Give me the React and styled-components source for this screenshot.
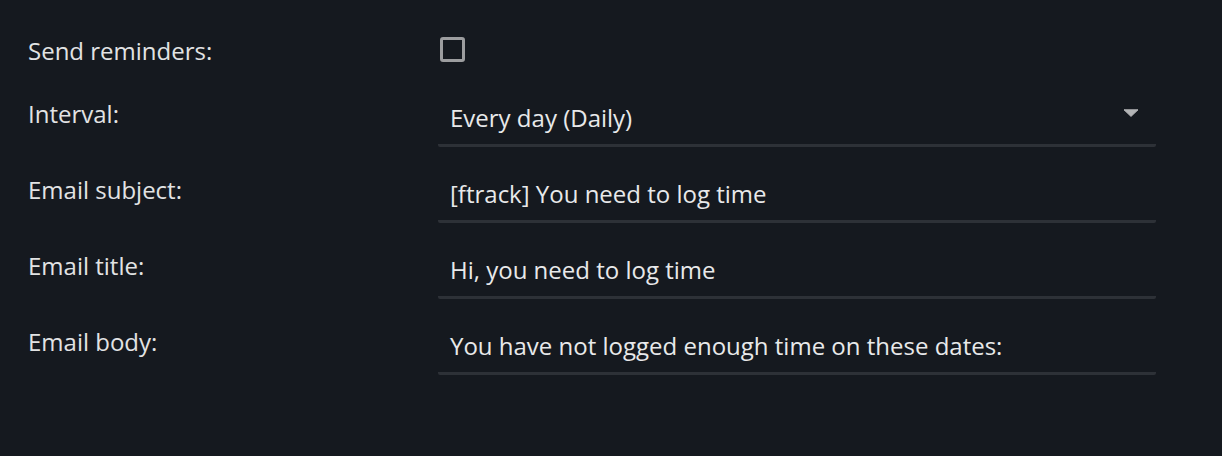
import React, { useState } from "react";
import styled, { createGlobalStyle } from "styled-components";

const GlobalStyle = createGlobalStyle`
  html, body {
    margin: 0;
    padding: 0;
    background: #15191f;
  }
  #root {
    min-height: 100vh;
  }
`;

const Page = styled.div`
  box-sizing: border-box;
  min-height: 100vh;
  background: #15191f;
  font-family: "Open Sans", "Noto Sans", sans-serif;
  font-size: 24px;
  color: #e4e5e6;
`;

const Form = styled.div`
  display: flex;
  flex-direction: column;
  gap: 26px;
  padding: 34px 0 0 28px;
`;

const Row = styled.div`
  display: grid;
  grid-template-columns: 410px 718px;
  align-items: start;
`;

const Label = styled.label`
  line-height: 33px;
  color: #e2e3e4;
`;

const CheckCell = styled.div`
  box-sizing: border-box;
  height: 37px;
  padding: 3px 0 0 2px;
`;

const CheckBox = styled.button`
  box-sizing: border-box;
  display: block;
  width: 25px;
  height: 25px;
  padding: 0;
  border: 3px solid #9c9d9f;
  border-radius: 3px;
  background: ${(p) => (p.checked ? "#9c9d9f" : "transparent")};
  cursor: pointer;
`;

const Field = styled.div`
  box-sizing: border-box;
  display: flex;
  align-items: flex-start;
  justify-content: space-between;
  padding: 4px 17px 10px 12px;
  border-bottom: 3px solid #2d3137;
  border-radius: 0 0 2px 2px;
  line-height: 33px;
  color: #e8e9ea;
  cursor: ${(p) => (p.select ? "pointer" : "text")};
`;

const Value = styled.span`
  white-space: nowrap;
`;

const Caret = styled.svg`
  display: block;
  margin-top: 8px;
  flex: none;
`;

const fields = [
  { label: "Email subject:", value: "[ftrack] You need to log time" },
  { label: "Email title:", value: "Hi, you need to log time" },
  { label: "Email body:", value: "You have not logged enough time on these dates:" },
];

export default function App() {
  const [remind, setRemind] = useState(false);

  return (
    <Page>
      <GlobalStyle />
      <Form>
        <Row>
          <Label>Send reminders:</Label>
          <CheckCell>
            <CheckBox checked={remind} onClick={() => setRemind(!remind)} />
          </CheckCell>
        </Row>
        <Row>
          <Label>Interval:</Label>
          <Field select>
            <Value>Every day (Daily)</Value>
            <Caret width="16" height="8" viewBox="0 0 16 8">
              <path d="M1 0.8 L15 0.8 L8 7.4 Z" fill="#b3b4b6" stroke="#b3b4b6" strokeWidth="1" strokeLinejoin="round" />
            </Caret>
          </Field>
        </Row>
        {fields.map((f) => (
          <Row key={f.label}>
            <Label>{f.label}</Label>
            <Field>
              <Value>{f.value}</Value>
            </Field>
          </Row>
        ))}
      </Form>
    </Page>
  );
}
